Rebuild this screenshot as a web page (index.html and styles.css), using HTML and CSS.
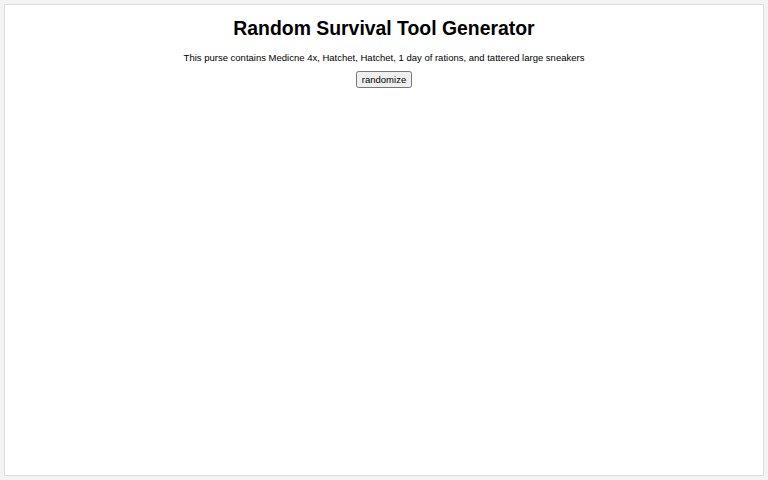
FILE: index.html
```html
<!DOCTYPE html>
<html lang="en">

<head>
  <meta charset="UTF-8" />
  <meta name="viewport" content="width=device-width, initial-scale=1.0" />
  <title>Random Survival Tool Generator</title>
  <link rel="stylesheet" href="styles.css">
</head>

<body>
  <div class="frame">
    <h1>Random Survival Tool Generator</h1>
    <p id="output">This purse contains Medicne 4x, Hatchet, Hatchet, 1 day of rations, and tattered large sneakers</p>
    <button onclick="randomize()">randomize</button>
  </div>

  <script>
    const containers = ["purse", "backpack", "duffel bag", "satchel", "fanny pack"];
    const tools = ["Medicne 4x", "Hatchet", "Rope", "Flashlight", "Matches", "Water filter", "Knife"];
    const foods = ["1 day of rations", "3 days of rations", "a can of beans", "trail mix"];
    const shoes = ["tattered large sneakers", "muddy hiking boots", "old sandals"];

    function pick(list) {
      return list[Math.floor(Math.random() * list.length)];
    }

    function randomize() {
      const text = `This ${pick(containers)} contains ${pick(tools)}, ${pick(tools)}, ${pick(tools)}, ${pick(foods)}, and ${pick(shoes)}`;
      document.getElementById("output").textContent = text;
    }
  </script>
</body>

</html>
```

FILE: styles.css
```css
html,
body {
  height: 100%;
}

body {
  font-family: 'Liberation Sans', Arial, sans-serif;
  background: #f3f3f3;
  margin: 0;
  padding: 4px;
  box-sizing: border-box;
  color: #000;
}

.frame {
  background: white;
  border: 1px solid #dcdcdc;
  height: 100%;
  box-sizing: border-box;
  text-align: center;
  padding-top: 12px;
}

h1 {
  font-size: 19.4px;
  margin: 0 0 12px;
}

p {
  font-size: 9.5px;
  margin: 0 0 6px;
}

button {
  font-family: 'Liberation Sans', Arial, sans-serif;
  font-size: 9.5px;
  padding: 1px 4px;
}
```
